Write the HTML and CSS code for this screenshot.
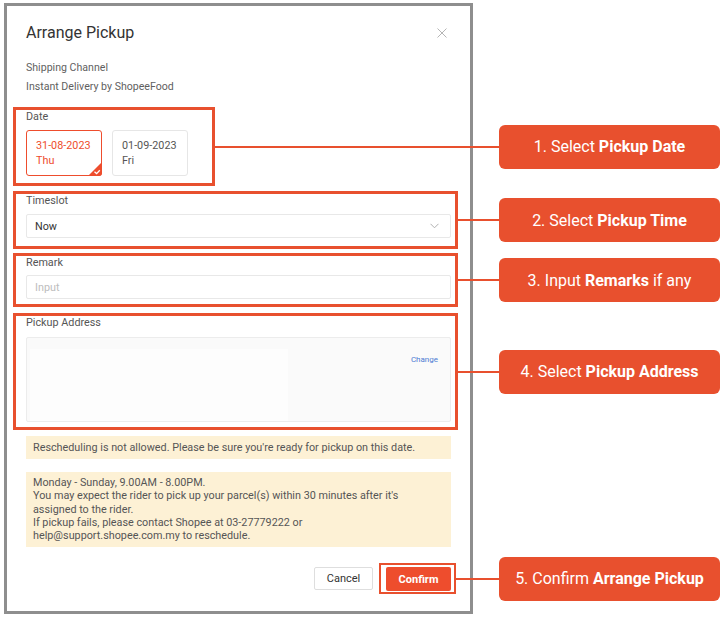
FILE: index.html
```html
<!DOCTYPE html>
<html lang="en">
<head>
<meta charset="utf-8">
<title>Arrange Pickup</title>
<link rel="stylesheet" href="styles.css">
</head>
<body>
<div class="page">
  <div class="modal">
    <div class="modal-head">
      <h1 class="title">Arrange Pickup</h1>
      <svg class="close" viewBox="0 0 10 10" width="10" height="10"><path d="M0.5 0.5 L9.5 9.5 M9.5 0.5 L0.5 9.5" stroke="#b5b5b5" stroke-width="1" fill="none"/></svg>
    </div>

    <div class="channel">
      <div>Shipping Channel</div>
      <div>Instant Delivery by ShopeeFood</div>
    </div>

    <div class="hl hl-date">
      <div class="field-label">Date</div>
      <div class="dates">
        <div class="date-card selected">
          <span>31-08-2023</span>
          <span>Thu</span>
          <svg class="tick" viewBox="0 0 14 14" width="14" height="14"><path d="M14 0 L14 11 Q14 14 11 14 L0 14 Z" fill="#ee4d2d"/><path d="M6.5 9.8 L8.6 11.6 L11.8 8.2" stroke="#fff" stroke-width="1.3" fill="none"/></svg>
        </div>
        <div class="date-card">
          <span>01-09-2023</span>
          <span>Fri</span>
        </div>
      </div>
      <div class="note"><span>1. Select <b>Pickup Date</b></span></div>
    </div>

    <div class="hl hl-time">
      <div class="field-label">Timeslot</div>
      <div class="control select">
        <span>Now</span>
        <svg class="chev" viewBox="0 0 9 6" width="9" height="6"><path d="M0.5 0.8 L4.5 4.8 L8.5 0.8" stroke="#b0b0b0" stroke-width="1" fill="none"/></svg>
      </div>
      <div class="note"><span>2. Select <b>Pickup Time</b></span></div>
    </div>

    <div class="hl hl-remark">
      <div class="field-label">Remark</div>
      <div class="control input"><span class="placeholder">Input</span></div>
      <div class="note"><span>3. Input <b>Remarks</b> if any</span></div>
    </div>

    <div class="hl hl-addr">
      <div class="field-label">Pickup Address</div>
      <div class="addr-box">
        <div class="addr-blank"></div>
        <span class="change">Change</span>
      </div>
      <div class="note"><span>4. Select <b>Pickup Address</b></span></div>
    </div>

    <div class="notice notice-single">Rescheduling is not allowed. Please be sure you're ready for pickup on this date.</div>

    <div class="notice notice-multi">
      Monday - Sunday, 9.00AM - 8.00PM.<br>
      You may expect the rider to pick up your parcel(s) within 30 minutes after it's<br>
      assigned to the rider.<br>
      If pickup fails, please contact Shopee at 03-27779222 or<br>
      help@support.shopee.com.my to reschedule.
    </div>

    <div class="actions">
      <button class="btn btn-cancel">Cancel</button>
      <div class="hl-btn">
        <button class="btn btn-confirm">Confirm</button>
        <div class="note note-btn"><span>5. Confirm <b>Arrange Pickup</b></span></div>
      </div>
    </div>
  </div>
</div>
</body>
</html>
```

FILE: styles.css
```css
* { box-sizing: border-box; }

html, body {
  margin: 0;
  padding: 0;
  background: #ffffff;
}

body {
  font-family: Roboto, "Liberation Sans", Arial, sans-serif;
  color: #555;
  font-size: 10.8px;
  width: 725px;
  height: 619px;
  overflow: hidden;
}

.page {
  padding: 3px 0 0 4px;
}

.modal {
  width: 469px;
  height: 611px;
  border: 3px solid #8e8e8e;
  background: #fff;
  padding: 17px 19px 0 19px;
}

.modal-head {
  display: flex;
  align-items: center;
  justify-content: space-between;
  height: 20px;
}

.title {
  margin: 0;
  font-size: 16px;
  font-weight: 400;
  color: #333;
  line-height: 20px;
}

.close {
  margin-right: 4px;
  display: block;
}

.channel {
  margin-top: 15px;
  line-height: 19px;
  font-size: 10.6px;
  color: #5f5f5f;
}

.field-label {
  line-height: 14px;
  color: #555;
}

/* highlight frames */
.hl {
  position: relative;
  border: 3px solid #e8502e;
  margin-left: -13px;
  margin-right: -7px;
  padding: 0 4px 0 10px;
}

.hl::after {
  content: "";
  position: absolute;
  top: 50%;
  margin-top: -1px;
  height: 2px;
  left: 100%;
  right: calc(100% - 483px);
  background: #e8502e;
}

.note {
  position: absolute;
  left: 483px;
  top: 50%;
  transform: translateY(-50%);
  width: 221px;
  height: 44px;
  border-radius: 6px;
  background: #e8502e;
  color: #fff;
  font-size: 16px;
  display: flex;
  align-items: center;
  justify-content: center;
  white-space: nowrap;
}

.note b { font-weight: 700; }

.hl-date {
  margin-top: 11px;
  width: 202px;
  padding-right: 24px;
  padding-bottom: 7px;
}

.dates {
  margin-top: 6px;
  display: flex;
  gap: 10px;
}

.date-card {
  position: relative;
  width: 76px;
  height: 46px;
  border: 1px solid #e6e6e6;
  border-radius: 3px;
  padding: 7px 0 0 9px;
  display: flex;
  flex-direction: column;
  line-height: 15px;
  color: #555;
}

.date-card.selected {
  border-color: #ee4d2d;
  color: #ee4d2d;
}

.tick {
  position: absolute;
  right: -1px;
  bottom: -1px;
  display: block;
}

.hl-time {
  margin-top: 5px;
  padding-bottom: 8px;
}

.hl-remark {
  margin-top: 4px;
  padding-bottom: 5px;
}

.hl-addr {
  margin-top: 6px;
  padding-bottom: 5px;
}

.control {
  height: 24px;
  border: 1px solid #e8e8e8;
  border-radius: 2px;
  padding: 0 11px 0 8px;
  display: flex;
  align-items: center;
  justify-content: space-between;
  color: #333;
}

.select { margin-top: 6px; }
.input { margin-top: 5px; }

.placeholder { color: #bdbdbd; }

.chev { display: block; }

.addr-box {
  margin-top: 7px;
  height: 85px;
  border: 1px solid #ececec;
  border-radius: 2px;
  background: #fafafa;
  display: flex;
  justify-content: space-between;
  align-items: flex-start;
  padding: 11px 12px 0 3px;
}

.addr-blank {
  width: 258px;
  height: 72px;
  background: #fdfdfd;
}

.change {
  color: #4d7bd3;
  font-size: 8px;
  line-height: 10px;
  margin-top: 6px;
}

.notice {
  background: #fdf1d5;
  color: #555;
  padding: 0 7px;
}

.notice-single {
  margin-top: 6px;
  height: 23px;
  line-height: 23px;
}

.notice-multi {
  margin-top: 13px;
  padding-top: 4px;
  padding-bottom: 5px;
  line-height: 13.3px;
}

.actions {
  margin-top: 16px;
  display: flex;
  justify-content: flex-end;
  align-items: center;
  gap: 6px;
  margin-right: -5px;
}

.btn {
  font-family: Roboto, "Liberation Sans", Arial, sans-serif;
  font-size: 11px;
  border-radius: 2px;
  padding: 0;
  cursor: pointer;
}

.btn-cancel {
  width: 59px;
  height: 23px;
  background: #fff;
  border: 1px solid #dedede;
  color: #333;
}

.hl-btn {
  position: relative;
  border: 2px solid #e8502e;
  padding: 2px 3px 1px 5px;
}

.hl-btn::after {
  content: "";
  position: absolute;
  top: 50%;
  margin-top: -1px;
  height: 2px;
  left: 100%;
  right: calc(100% - 118px);
  background: #e8502e;
}

.btn-confirm {
  display: block;
  width: 65px;
  height: 24px;
  background: #ee4d2d;
  border: none;
  color: #fff;
  font-weight: 700;
}

.note-btn {
  left: 118px;
}
```
